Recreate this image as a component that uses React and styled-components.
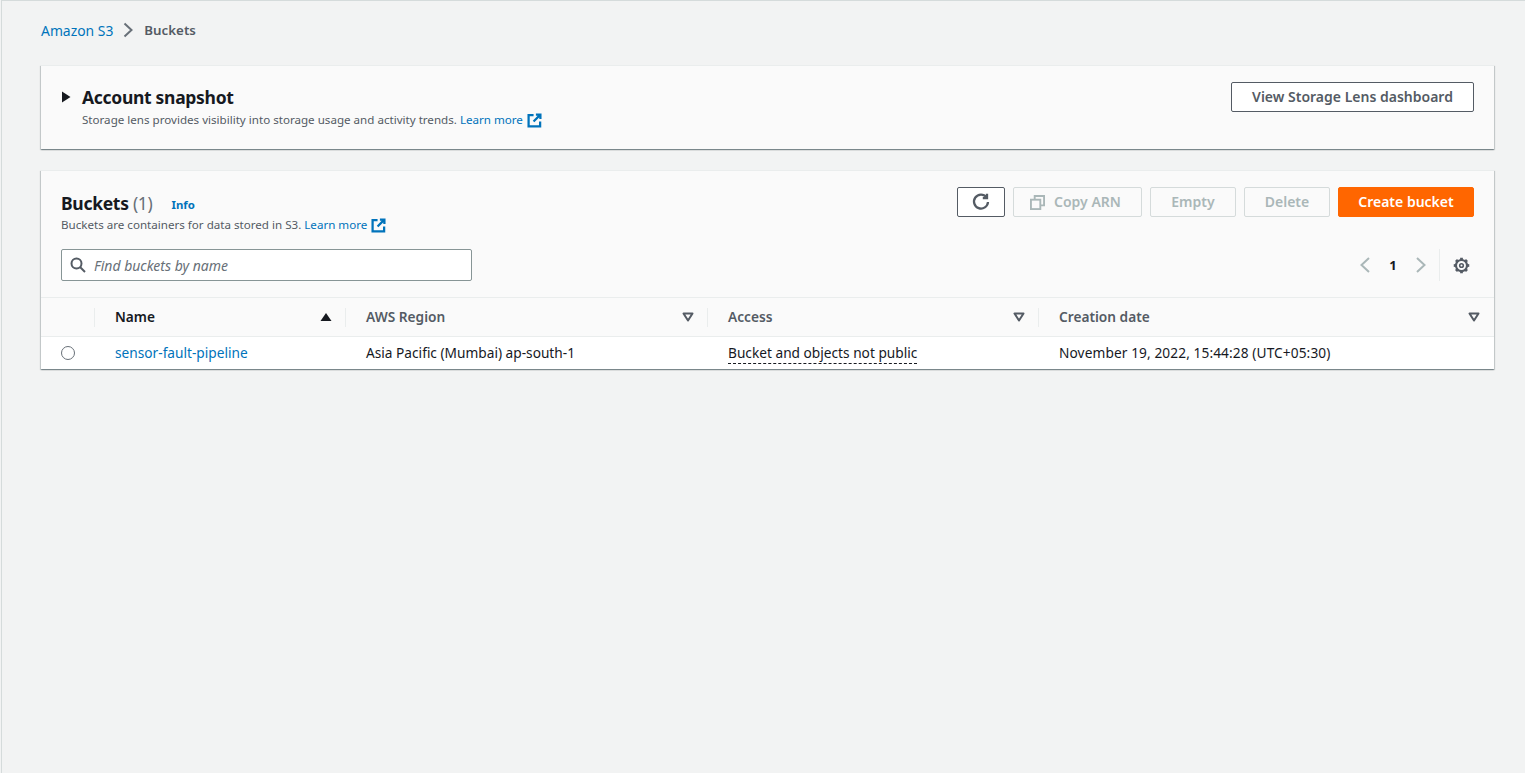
import React from "react";
import styled, { createGlobalStyle } from "styled-components";

const Global = createGlobalStyle`
  html, body { margin: 0; padding: 0; height: 100%; }
  body { background: #f2f3f3; font-family: "Noto Sans", "Open Sans", sans-serif; color: #16191f; overflow: hidden; }
  * { box-sizing: border-box; }
`;

const Page = styled.main`
  height: 773px;
  margin-left: 1px;
  border-top: 1px solid #d5dbdb;
  border-left: 1px solid #d5dbdb;
  padding: 0 31px 0 39px;
`;
const Crumbs = styled.nav`
  display: flex;
  align-items: center;
  height: 64px;
  padding-bottom: 6px;
  font-size: 13.9px;
`;
const CrumbLink = styled.a`color: #0073bb;`;
const CrumbCurrent = styled.span`color: #545b64; font-weight: 600; font-size: 13.3px;`;
const CrumbSep = styled.svg`
  width: 10px; height: 16px; margin: 0 11px 0 10px;
  fill: none; stroke: #687078; stroke-width: 2;
`;
const Card = styled.section`
  background: #fafafa;
  box-shadow: 0 1px 1px 0 rgba(0,28,36,.3), 1px 1px 1px 0 rgba(0,28,36,.15), -1px 1px 1px 0 rgba(0,28,36,.15);
  border-top: 1px solid #eaeded;
`;
const SnapshotCard = styled(Card)`
  height: 84px;
  margin-bottom: 21px;
  padding: 16px 20px 0 20px;
  display: flex;
  justify-content: space-between;
  align-items: flex-start;
`;
const SnapshotHead = styled.div`display: flex; gap: 11px; margin-top: 3px;`;
const Caret = styled.svg`width: 10px; height: 12px; margin-top: 6px; fill: #16191f;`;
const Title = styled.h2`
  margin: 0; font-size: 17.5px; letter-spacing: -0.3px; line-height: 24px; font-weight: 700; color: #16191f;
`;
const Count = styled.span`font-weight: 400; color: #687078;`;
const Desc = styled.p`
  margin: 3px 0 0; font-size: 11.6px; line-height: 16px; color: #545b64;
  display: flex; align-items: center;
`;
const BucketDesc = styled(Desc)`margin-top: -2px;`;
const DescLink = styled.a`color: #0073bb; margin-left: 3px;`;
const ExtIcon = styled.svg`
  width: 15px; height: 15px; margin-left: 4px; fill: none; stroke: #0073bb; stroke-width: 2.4;
`;
const Btn = styled.button`
  height: 30px;
  padding: 0 0 2px;
  border-radius: 2px;
  font: 600 14px "Noto Sans", sans-serif;
  display: inline-flex;
  align-items: center;
  justify-content: center;
  background: ${p => p.$primary ? "#ff6600" : p.$disabled ? "#fafafa" : "#fff"};
  color: ${p => p.$primary ? "#fff" : p.$disabled ? "#aab7b8" : "#545b64"};
  border: 1px solid ${p => p.$primary ? "#ff6600" : p.$disabled ? "#d5dbdb" : "#545b64"};
  width: ${p => p.$w}px;
`;
const RefreshIcon = styled.svg`
  width: 18px; height: 18px; margin-top: 2px; fill: none; stroke: #545b64; stroke-width: 2.3;
`;
const CopyIcon = styled.svg`
  width: 15px; height: 15px; margin: 2px 9px 0 -4px; fill: none; stroke: #aab7b8; stroke-width: 2;
`;
const BucketsCard = styled(Card)`height: 199px;`;
const Header = styled.div`
  height: 127px;
  padding: 16px 20px 0 20px;
  border-bottom: 1px solid #eaeded;
  display: flex;
  justify-content: space-between;
`;
const HeadLeft = styled.div`display: flex; flex-direction: column;`;
const TitleRow = styled.div`display: flex; align-items: center; height: 32px;`;
const Info = styled.a`
  color: #0073bb; font-size: 11.4px; font-weight: 700; margin: 3px 0 0 19px;
`;
const Search = styled.div`
  width: 411px; height: 32px; margin-top: 16px;
  background: #fff; border: 1px solid #879596; border-radius: 2px;
  display: flex; align-items: center; padding-left: 8px; gap: 8px;
  font-size: 14px; font-style: italic; color: #687078;
`;
const SearchIcon = styled.svg`
  width: 16px; height: 16px; fill: none; stroke: #545b64; stroke-width: 2;
`;
const HeadRight = styled.div`display: flex; flex-direction: column; align-items: flex-end;`;
const Actions = styled.div`display: flex; gap: 8px;`;
const Pager = styled.div`
  display: flex; align-items: center; height: 32px; margin-top: 32px; margin-right: 4px;
  font-size: 13px; font-weight: 700; color: #16191f;
`;
const PagerIcon = styled.svg`
  width: 12px; height: 18px; fill: none; stroke: #aab7b8; stroke-width: 2;
`;
const PageNum = styled.span`width: 44px; text-align: center;`;
const PagerDivider = styled.span`
  width: 1px; height: 32px; background: #eaeded; margin: 0 13px 0 12px;
`;
const GearIcon = styled.svg`
  width: 17px; height: 17px; fill: none; stroke: #545b64;
`;
const Grid = styled.div`
  display: grid;
  grid-template-columns: 53px 251px 362px 331px 1fr;
`;
const HeadRow = styled(Grid)`
  height: 39px;
  border-bottom: 1px solid #eaeded;
  align-items: center;
`;
const Th = styled.div`
  height: 19px;
  border-left: 1px solid #eaeded;
  padding: 0 13px 2px 20px;
  display: flex; align-items: center; justify-content: space-between;
  font-size: 13.7px; font-weight: 600; color: ${p => p.$active ? "#16191f" : "#545b64"};
  &:last-child { padding-right: 14px; }
`;
const SortIcon = styled.svg`width: 12px; height: 10px; margin-top: 2px;`;
const BodyRow = styled(Grid)`
  height: 32px;
  padding-bottom: 1px;
  background: #fff;
  align-items: center;
  font-size: 13.7px;
  color: #16191f;
`;
const Td = styled.div`
  padding-left: 21px; white-space: nowrap;
  letter-spacing: ${p => p.$track || 0}px;
`;
const RadioCell = styled.div`padding-left: 20px; display: flex;`;
const Radio = styled.span`
  width: 14px; height: 14px; border-radius: 50%; border: 1px solid #687078; background: #fff;
`;
const RowLink = styled.a`color: #0073bb;`;
const Dashed = styled.span`border-bottom: 1px dashed #16191f; padding-bottom: 1px;`;

const Ext = () => (
  <ExtIcon viewBox="0 0 16 16">
    <path d="M7 2.200H1.700v12.100H14V9" />
    <path d="M9.500 1.700h4.800v4.800M14 2L7 9" />
  </ExtIcon>
);
const FilterIcon = () => (
  <SortIcon viewBox="0 0 12 10">
    <path d="M1.500 1.500h9L6 8.500z" fill="none" stroke="#545b64" strokeWidth="2" strokeLinejoin="round" />
  </SortIcon>
);
const gearTeeth = [0, 45, 90, 135, 180, 225, 270, 315];

export default function App() {
  return (
    <Page>
      <Global />
      <Crumbs>
        <CrumbLink>Amazon S3</CrumbLink>
        <CrumbSep viewBox="0 0 10 16"><path d="M1.500 1.500L8.500 8l-7 6.500" /></CrumbSep>
        <CrumbCurrent>Buckets</CrumbCurrent>
      </Crumbs>
      <SnapshotCard>
        <SnapshotHead>
          <Caret viewBox="0 0 10 12"><path d="M1 0.500L9.500 6 1 11.500z" /></Caret>
          <div>
            <Title>Account snapshot</Title>
            <Desc>
              Storage lens provides visibility into storage usage and activity trends.
              <DescLink>Learn more</DescLink>
              <Ext />
            </Desc>
          </div>
        </SnapshotHead>
        <Btn $w={243}>View Storage Lens dashboard</Btn>
      </SnapshotCard>
      <BucketsCard>
        <Header>
          <HeadLeft>
            <TitleRow>
              <Title>Buckets <Count>(1)</Count></Title>
              <Info>Info</Info>
            </TitleRow>
            <BucketDesc>
              Buckets are containers for data stored in S3.
              <DescLink>Learn more</DescLink>
              <Ext />
            </BucketDesc>
            <Search>
              <SearchIcon viewBox="0 0 16 16">
                <circle cx="6.500" cy="6.500" r="5" /><path d="M10 10l5 5" />
              </SearchIcon>
              Find buckets by name
            </Search>
          </HeadLeft>
          <HeadRight>
            <Actions>
              <Btn $w={48}>
                <RefreshIcon viewBox="0 0 18 18">
                  <path d="M14.500 4.200A7 7 0 1 0 16 9" /><path d="M15 .8v4.200h-4.200" />
                </RefreshIcon>
              </Btn>
              <Btn $w={129} $disabled>
                <CopyIcon viewBox="0 0 16 16">
                  <rect x="1" y="5" width="10" height="10" /><path d="M5 5V1h10v10h-4" />
                </CopyIcon>
                Copy ARN
              </Btn>
              <Btn $w={86} $disabled>Empty</Btn>
              <Btn $w={86} $disabled>Delete</Btn>
              <Btn $w={136} $primary>Create bucket</Btn>
            </Actions>
            <Pager>
              <PagerIcon viewBox="0 0 12 18"><path d="M10 2L2.500 9l7.500 7" /></PagerIcon>
              <PageNum>1</PageNum>
              <PagerIcon viewBox="0 0 12 18"><path d="M2 2l7.500 7L2 16" /></PagerIcon>
              <PagerDivider />
              <GearIcon viewBox="0 0 16 16">
                <circle cx="8" cy="8" r="5.200" strokeWidth="2" />
                <circle cx="8" cy="8" r="1.700" strokeWidth="1.500" />
                {gearTeeth.map(a => (
                  <path key={a} d="M8 3V.7" strokeWidth="2.600" transform={`rotate(${a} 8 8)`} />
                ))}
              </GearIcon>
            </Pager>
          </HeadRight>
        </Header>
        <HeadRow>
          <div />
          <Th $active>
            Name
            <SortIcon viewBox="0 0 12 10"><path d="M6 1l5.500 8H.5z" fill="#16191f" /></SortIcon>
          </Th>
          <Th>AWS Region<FilterIcon /></Th>
          <Th>Access<FilterIcon /></Th>
          <Th>Creation date<FilterIcon /></Th>
        </HeadRow>
        <BodyRow>
          <RadioCell><Radio /></RadioCell>
          <Td><RowLink>sensor-fault-pipeline</RowLink></Td>
          <Td>Asia Pacific (Mumbai) ap-south-1</Td>
          <Td><Dashed>Bucket and objects not public</Dashed></Td>
          <Td $track={0.1}>November 19, 2022, 15:44:28 (UTC+05:30)</Td>
        </BodyRow>
      </BucketsCard>
    </Page>
  );
}
